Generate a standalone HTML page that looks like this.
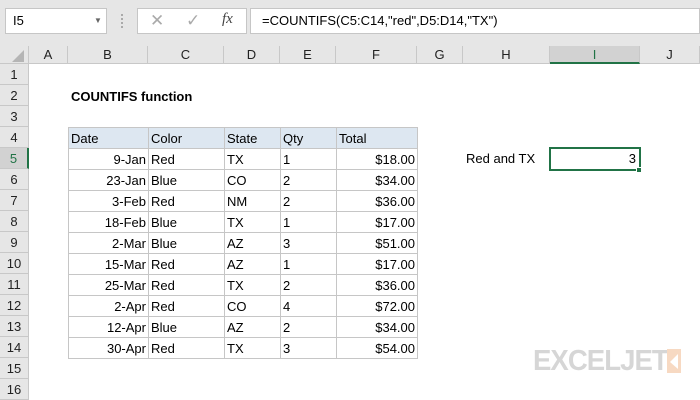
<!DOCTYPE html>
<html><head><style>
*{margin:0;padding:0;box-sizing:border-box}
body{width:700px;height:400px;overflow:hidden;background:#fff;font-family:"Liberation Sans",Arial,sans-serif;font-size:13px;color:#000;position:relative}
.a{position:absolute}
.top{left:0;top:0;width:700px;height:46px;background:#e6e6e6}
.box{background:#fff;border:1px solid #c6c6c6}
.ch{top:46px;height:18px;background:#e6e6e6;border-right:1px solid #c8c8c8;border-bottom:1px solid #c8c8c8;text-align:center;line-height:18px;color:#222;font-size:13px}
.rh{left:0;width:29px;height:21px;background:#e6e6e6;border-bottom:1px solid #c8c8c8;border-right:1px solid #c8c8c8;text-align:center;line-height:21px;color:#222}
table{position:absolute;left:68px;top:127px;border-collapse:collapse}
td{border:1px solid #c6c6c6;height:21px;padding:0 2px;line-height:19px;white-space:nowrap}
tr.h td{background:#dde7f1}
.r{text-align:right}
</style></head><body>
<div class="a top"></div>
<div class="a box" style="left:5px;top:8px;width:102px;height:26px;line-height:24px;padding-left:7px">I5<span class="a" style="left:88px;top:0;font-size:8px;color:#666">▼</span></div>
<div class="a" style="left:121px;top:14px;width:2px;height:14px;border-left:2px dotted #aaa"></div>
<div class="a box" style="left:137px;top:8px;width:110px;height:26px"></div>
<div class="a" style="left:150px;top:11px;color:#aaa;font-size:17px">✕</div>
<div class="a" style="left:186px;top:11px;color:#aaa;font-size:17px">✓</div>
<div class="a" style="left:222px;top:11px;color:#444;font-style:italic;font-family:'Liberation Serif',serif;font-size:15px">fx</div>
<div class="a box" style="left:250px;top:8px;width:450px;height:26px;line-height:24px;padding-left:11px;font-size:13px">=COUNTIFS(C5:C14,"red",D5:D14,"TX")</div>
<div class="a" style="left:0;top:46px;width:29px;height:18px;background:#e6e6e6;border-right:1px solid #c8c8c8;border-bottom:1px solid #c8c8c8"></div>
<div class="a" style="left:12px;top:50px;width:0;height:0;border-left:12px solid transparent;border-bottom:12px solid #b5b5b5"></div>
<div class="a ch" style="left:29px;width:39px">A</div>
<div class="a ch" style="left:68px;width:80px">B</div>
<div class="a ch" style="left:148px;width:76px">C</div>
<div class="a ch" style="left:224px;width:56px">D</div>
<div class="a ch" style="left:280px;width:56px">E</div>
<div class="a ch" style="left:336px;width:81px">F</div>
<div class="a ch" style="left:417px;width:46px">G</div>
<div class="a ch" style="left:463px;width:87px">H</div>
<div class="a ch" style="left:550px;width:90px;background:#d2d2d2;border-bottom:2px solid #217346;color:#217346">I</div>
<div class="a ch" style="left:640px;width:60px">J</div>
<div class="a rh" style="top:64px">1</div>
<div class="a rh" style="top:85px">2</div>
<div class="a rh" style="top:106px">3</div>
<div class="a rh" style="top:127px">4</div>
<div class="a rh" style="top:148px;background:#d2d2d2;border-right:2px solid #217346;color:#217346">5</div>
<div class="a rh" style="top:169px">6</div>
<div class="a rh" style="top:190px">7</div>
<div class="a rh" style="top:211px">8</div>
<div class="a rh" style="top:232px">9</div>
<div class="a rh" style="top:253px">10</div>
<div class="a rh" style="top:274px">11</div>
<div class="a rh" style="top:295px">12</div>
<div class="a rh" style="top:316px">13</div>
<div class="a rh" style="top:337px">14</div>
<div class="a rh" style="top:358px">15</div>
<div class="a rh" style="top:379px">16</div>
<div class="a" style="left:71px;top:89px;font-weight:bold">COUNTIFS function</div>
<table>
<colgroup><col style="width:80px"><col style="width:76px"><col style="width:56px"><col style="width:56px"><col style="width:81px"></colgroup>
<tr class="h"><td>Date</td><td>Color</td><td>State</td><td>Qty</td><td>Total</td></tr>
<tr><td class="r">9-Jan</td><td>Red</td><td>TX</td><td>1</td><td class="r">$18.00</td></tr>
<tr><td class="r">23-Jan</td><td>Blue</td><td>CO</td><td>2</td><td class="r">$34.00</td></tr>
<tr><td class="r">3-Feb</td><td>Red</td><td>NM</td><td>2</td><td class="r">$36.00</td></tr>
<tr><td class="r">18-Feb</td><td>Blue</td><td>TX</td><td>1</td><td class="r">$17.00</td></tr>
<tr><td class="r">2-Mar</td><td>Blue</td><td>AZ</td><td>3</td><td class="r">$51.00</td></tr>
<tr><td class="r">15-Mar</td><td>Red</td><td>AZ</td><td>1</td><td class="r">$17.00</td></tr>
<tr><td class="r">25-Mar</td><td>Red</td><td>TX</td><td>2</td><td class="r">$36.00</td></tr>
<tr><td class="r">2-Apr</td><td>Red</td><td>CO</td><td>4</td><td class="r">$72.00</td></tr>
<tr><td class="r">12-Apr</td><td>Blue</td><td>AZ</td><td>2</td><td class="r">$34.00</td></tr>
<tr><td class="r">30-Apr</td><td>Red</td><td>TX</td><td>3</td><td class="r">$54.00</td></tr>
</table>
<div class="a" style="left:466px;top:151px">Red and TX</div>
<div class="a" style="left:549px;top:147px;width:92px;height:24px;border:2px solid #217346;text-align:right;padding-right:3px;line-height:20px">3</div>
<div class="a" style="left:636px;top:167px;width:6px;height:6px;background:#217346;border:1px solid #fff"></div>
<div class="a" style="left:533px;top:345px;font-size:29px;font-weight:bold;color:#d6d6d6;letter-spacing:-1px;transform:scaleX(0.95);transform-origin:left">EXCELJET</div>
<div class="a" style="left:667px;top:349px;width:14px;height:24px;background:#f7d9c2"></div>
<svg class="a" style="left:667px;top:349px" width="14" height="24"><path d="M3 13 L11 5 L11 20 Z" fill="#fff"/></svg>
</body></html>
